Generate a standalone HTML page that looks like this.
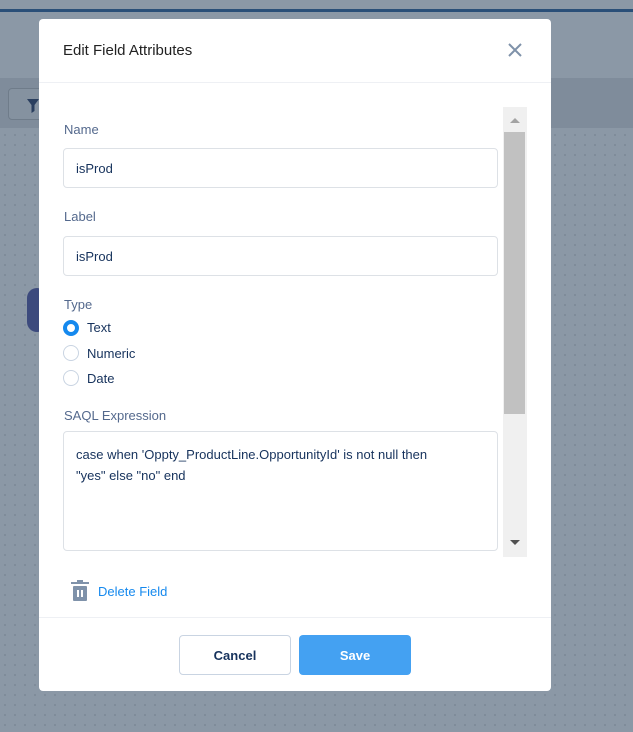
<!DOCTYPE html>
<html><head><style>
*{box-sizing:border-box;margin:0;padding:0}
body{width:633px;height:732px;overflow:hidden;position:relative;font-family:"Liberation Sans",sans-serif;background-color:#8b98a6;background-image:radial-gradient(circle,#7e8b99 1px,transparent 1.2px);background-size:10px 10px;}
.top{position:absolute;left:0;top:0;width:633px;height:78px;background:#8b98a6}
.line{position:absolute;left:0;top:9px;width:633px;height:3px;background:#2a4f78}
.band{position:absolute;left:0;top:78px;width:633px;height:50px;background:#7f8c9b}
.fbtn{position:absolute;left:8px;top:88px;width:40px;height:32px;border:1px solid #6f7c8a;border-radius:4px;background:#8592a0}
.node{position:absolute;left:27px;top:288px;width:20px;height:44px;background:#3c4a7d;border-radius:10px}
.modal{position:absolute;left:39px;top:19px;width:512px;height:672px;background:#fff;border-radius:4px}
.hd{height:64px;border-bottom:1px solid #eef0f4;position:relative}
.hd h1{position:absolute;left:24px;top:23px;font-size:15px;font-weight:normal;color:#222}
.x{position:absolute;left:468px;top:23px}
.lbl{position:absolute;left:25px;font-size:13px;color:#54698d}
.inp{position:absolute;left:24px;width:435px;height:40px;border:1px solid #dde1e6;border-radius:4px;font-size:13px;color:#16325c;padding:12px}
.rad{position:absolute;left:24px;width:16px;height:16px;border:1px solid #c9d4e2;border-radius:50%}
.rt{position:absolute;left:48px;font-size:13px;color:#16325c}
.sb{position:absolute;left:464px;top:88px;width:24px;height:450px;background:#f0f0f0}
.thumb{position:absolute;left:465px;top:113px;width:21px;height:282px;background:#c1c1c1}
.ft{position:absolute;left:0;top:598px;width:512px;border-top:1px solid #eef0f4}
.btn{position:absolute;top:616px;width:112px;height:40px;border-radius:4px;font-size:13px;font-weight:bold;text-align:center;line-height:40px}
</style></head><body>
<div class="top"></div><div class="line"></div><div class="band"></div>
<div class="fbtn"><svg width="40" height="32"><path d="M18 10h12l-4.5 6v6l-3 2v-8z" fill="#2a3f5f"/></svg></div>
<div class="node"></div>
<div class="modal">
<div class="hd"><h1>Edit Field Attributes</h1>
<svg class="x" width="16" height="16"><path d="M2 2L14 14M14 2L2 14" stroke="#7f92aa" stroke-width="2"/></svg></div>
<div class="sb"></div><div class="thumb"></div>
<svg style="position:absolute;left:470px;top:97px" width="12" height="8"><path d="M1 7L6 2L11 7Z" fill="#a3a3a3"/></svg>
<svg style="position:absolute;left:470px;top:520px" width="12" height="8"><path d="M1 1L6 6L11 1Z" fill="#505050"/></svg>
<div class="lbl" style="top:103px">Name</div>
<div class="inp" style="top:129px">isProd</div>
<div class="lbl" style="top:190px">Label</div>
<div class="inp" style="top:217px">isProd</div>
<div class="lbl" style="top:278px">Type</div>
<div class="rad" style="top:301px;border:4px solid #1589ee"></div><div class="rt" style="top:301px">Text</div>
<div class="rad" style="top:326px"></div><div class="rt" style="top:327px">Numeric</div>
<div class="rad" style="top:351px"></div><div class="rt" style="top:352px">Date</div>
<div class="lbl" style="top:389px">SAQL Expression</div>
<div class="inp" style="top:412px;height:120px;line-height:21px;padding:12px 30px 12px 12px">case when 'Oppty_ProductLine.OpportunityId' is not null then<br>"yes" else "no" end</div>
<svg style="position:absolute;left:31px;top:561px" width="20" height="22"><rect x="1" y="2" width="18" height="2" fill="#7f92aa"/><rect x="7" y="0" width="6" height="3" fill="#7f92aa"/><rect x="3" y="6" width="14" height="15" rx="1" fill="#7f92aa"/><rect x="7" y="10" width="2" height="7" fill="#fff"/><rect x="11" y="10" width="2" height="7" fill="#fff"/></svg>
<div style="position:absolute;left:59px;top:565px;font-size:13px;color:#1589ee">Delete Field</div>
<div class="ft"></div>
<div class="btn" style="left:140px;border:1px solid #c9d4e2;color:#16325c">Cancel</div>
<div class="btn" style="left:260px;background:#44a1f2;color:#fff;line-height:42px">Save</div>
</div>
</body></html>
